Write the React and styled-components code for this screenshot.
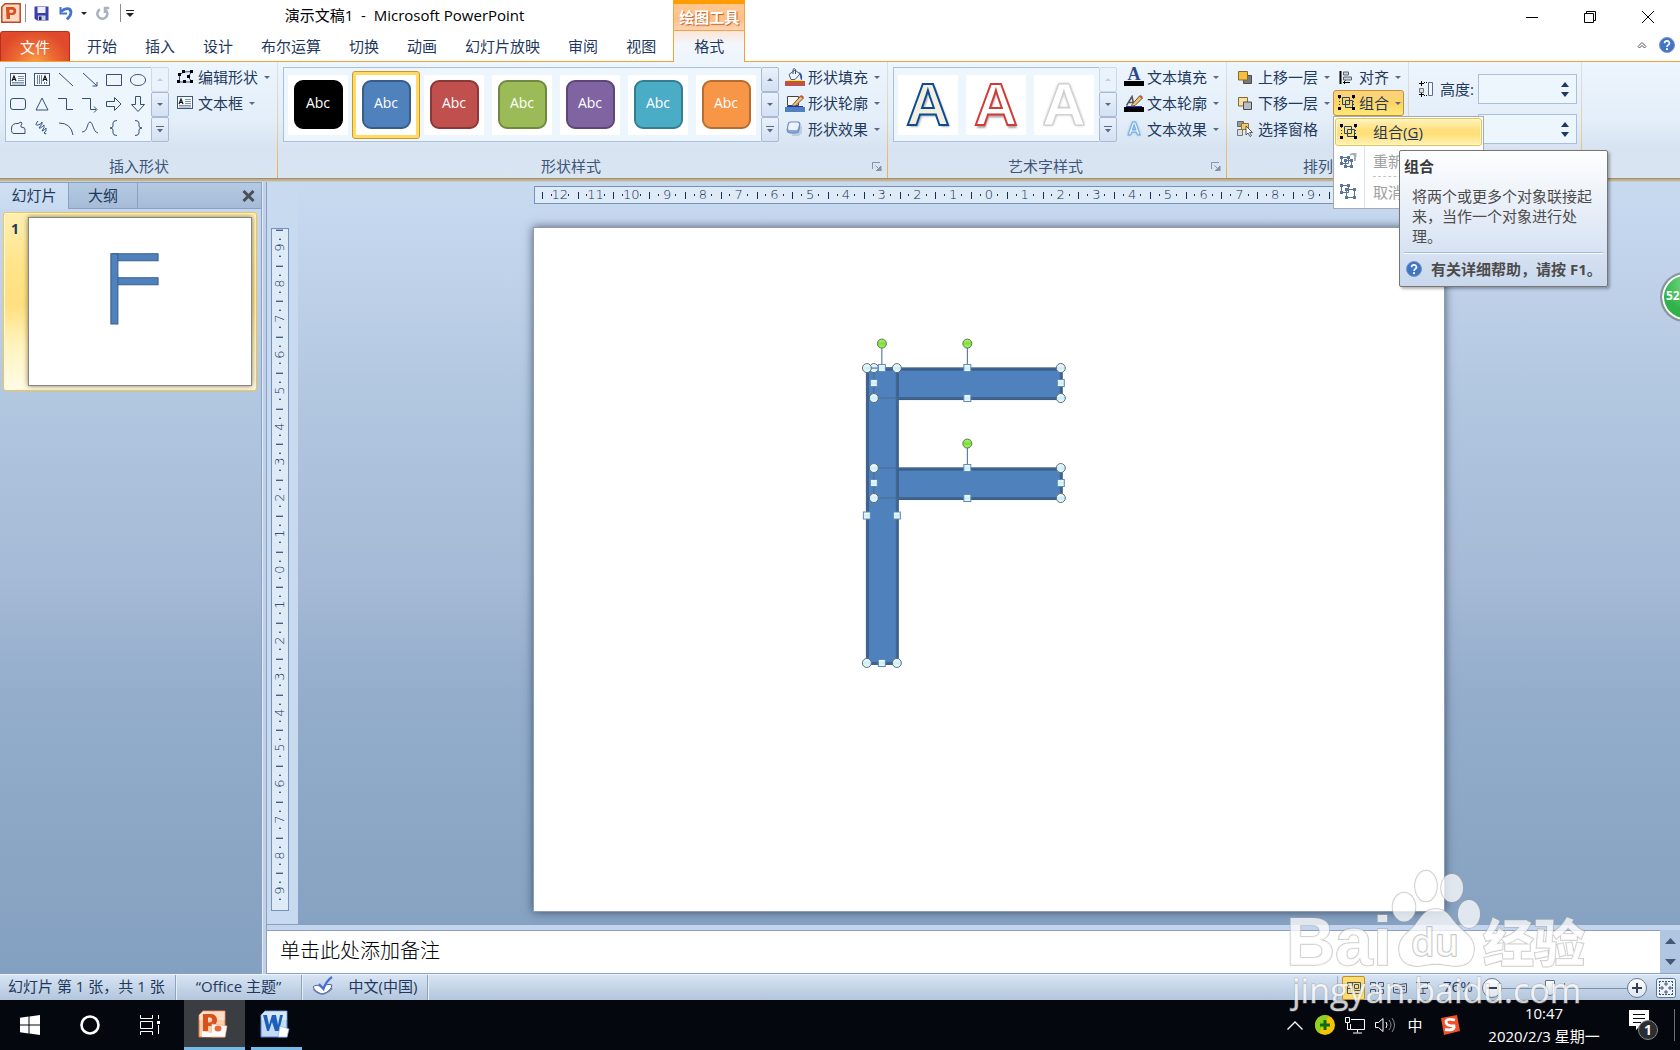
import React from 'react';
import styled, { createGlobalStyle, css } from 'styled-components';

const ink = '#1e395b';
const edge = '#8ba0c4';
const slideHeight = 'calc(100vh - 367px)';

const GlobalStyle = createGlobalStyle`
  * { box-sizing: border-box; }
  body {
    margin: 0;
    overflow: hidden;
    font-family: "Open Sans", "Noto Sans CJK SC", sans-serif;
    font-size: 15px;
    line-height: 20px;
    color: ${ink};
  }
  button, input {
    font: inherit;
    color: inherit;
    margin: 0;
    padding: 0;
    border: 0;
    background: none;
  }
  svg { display: block; flex: none; }
`;

const Desktop = styled.div`
  position: relative;
  display: flex;
  flex-direction: column;
  height: 100vh;
  overflow: hidden;
  background: #ffffff;
`;

/* ---------- title bar and tabs ---------- */

const Header = styled.header`
  display: grid;
  grid-template-columns: auto 72px 1fr;
  grid-template-rows: 31px 31px;
`;

const TitleBar = styled.div`
  display: flex;
  align-items: center;
  padding-bottom: 2px;
`;

const QuickAccess = styled.div`
  display: flex;
  align-items: center;
  align-self: flex-start;
  width: 136px;
  height: 26px;
  padding-left: 1px;
`;

const QuickButton = styled.button`
  display: flex;
  align-items: center;
  justify-content: center;
  width: ${(p) => p.$w || 20}px;
  height: 24px;
`;

const QuickLine = styled.span`
  width: 1px;
  height: 18px;
  margin: 0 4px;
  background: #8d8d8d;
`;

const WindowTitle = styled.h1`
  flex: 1;
  margin: 0;
  font-size: 15px;
  font-weight: 400;
  text-align: center;
  color: #000000;
`;

const ContextTitle = styled.div`
  display: flex;
  align-items: center;
  justify-content: center;
  border: 1px solid #f0a24a;
  border-width: 4px 1px 1px;
  border-top-color: #ff9d00;
  background: linear-gradient(#ffc88f, #fdbf8a 60%, #fdd3b0);
  color: #ffffff;
  font-weight: 700;
  text-shadow: 1px 1px 1px #b8622c;
`;

const WindowButtons = styled.div`
  display: flex;
  justify-content: flex-end;
  padding: 3px 3px 0 0;
`;

const WindowButton = styled.button`
  display: flex;
  align-items: center;
  justify-content: center;
  width: 58px;
  height: 28px;
`;

const Tabs = styled.div`
  display: flex;
  padding-right: 3px;
  border-bottom: 1px solid #f2a433;
`;

const Tab = styled.button`
  height: 30px;
  padding: 0 14px;
  white-space: nowrap;
`;

const FileTab = styled(Tab)`
  width: 70px;
  margin-right: 3px;
  border: 1px solid #b5321a;
  border-bottom: 0;
  border-radius: 3px 3px 0 0;
  background: radial-gradient(ellipse at 50% 110%, #fba24b 0%, #ec6a33 40%, #e0492b 75%);
  color: #ffffff;
`;

const FormatTab = styled(Tab)`
  height: 31px;
  padding-bottom: 2px;
  border: 1px solid #f2a433;
  border-width: 0 1px;
  background: linear-gradient(#fbe6d8, #f3f6fd 45%, #edf5fd);
`;

const HelpArea = styled.div`
  display: flex;
  align-items: center;
  justify-content: flex-end;
  gap: 12px;
  padding: 0 5px 2px 0;
  border-bottom: 1px solid #f2a433;
`;

/* ---------- ribbon ---------- */

const Ribbon = styled.section`
  display: flex;
  height: 116px;
  background: linear-gradient(#edf5fd, #e3eef9 50%, #d7e3f1 75%, #dae5f2);
`;

const RibbonEdge = styled.div`
  height: 4px;
  background: linear-gradient(#a5906b 1px, #bba983 1px, #cbb78f 3px, #c3cedc 3px);
`;

const Group = styled.div`
  display: flex;
  flex-direction: column;
  padding: 2px 4px 0 5px;
  border-right: 1px solid;
  border-image: linear-gradient(#d8e2ee, #e6cfa6 55%, #f2ad45) 0 1 0 0;
`;

const GroupBody = styled.div`
  display: flex;
  gap: ${(p) => p.$gap ?? 3}px;
  height: 90px;
`;

const GroupLabel = styled.div`
  display: flex;
  align-items: center;
  height: 24px;
  color: #3e5578;

  span { flex: 1; text-align: center; }
`;

const Launcher = styled.button`
  display: flex;
  align-items: center;
  justify-content: center;
  width: 20px;
  height: 20px;
  margin: 0 -4px 0 8px;
`;

const Gallery = styled.div`
  display: flex;
  height: 75px;
  margin-top: 3px;
`;

const GalleryBox = styled.div`
  display: flex;
  align-items: center;
  border: 1px solid #a9bfdd;
  border-right: 0;
  background: #eef6fd;
  padding-right: 1px;
`;

const ShapeGrid = styled(GalleryBox)`
  display: grid;
  grid-template-columns: repeat(6, 24px);
  grid-template-rows: repeat(3, 24px);
`;

const ShapeButton = styled.button`
  display: flex;
  align-items: center;
  justify-content: center;
`;

const GalleryScroll = styled.div`
  display: grid;
  grid-template-rows: repeat(3, 1fr);
  width: 18px;
`;

const ScrollButton = styled.button`
  display: flex;
  align-items: center;
  justify-content: center;
  border: 1px solid ${(p) => (p.$off ? '#ccd9ea' : '#a9b9d6')};
  border-radius: 2px;
  background: ${(p) => (p.$off ? '#eaf2fb' : 'linear-gradient(#e9f1fb, #d3e1f3)')};
  color: ${(p) => (p.$off ? '#c3cfdf' : '#596a83')};
`;

const StyleCell = styled.button`
  display: flex;
  align-items: center;
  justify-content: center;
  width: 68px;
  height: 68px;
  border: 4px solid transparent;
  background: #ffffff content-box;
  ${(p) => p.$selected && css`
    border: 1px solid #c79a2b;
    border-radius: 3px;
    background: #ffffff;
    box-shadow: inset 0 0 0 3px #ffdb66;
  `}
`;

const Swatch = styled.span`
  display: flex;
  align-items: center;
  justify-content: center;
  width: 49px;
  height: 49px;
  padding-bottom: 3px;
  border: 2px solid ${(p) => p.$line};
  border-radius: 9px;
  background: ${(p) => p.$fill};
  color: #ffffff;
  font-size: 14px;
`;

const WordArt = styled.span`
  font-family: "Liberation Sans", sans-serif;
  font-size: 60px;
  font-weight: 700;
  line-height: 60px;
  color: ${(p) => p.$fill};
  -webkit-text-stroke: ${(p) => p.$width}px ${(p) => p.$line};
  text-shadow: ${(p) => p.$shadow};
`;

const ToolColumn = styled.div`
  display: flex;
  flex-direction: column;
`;

const ToolButton = styled.button`
  display: flex;
  align-items: center;
  gap: 3px;
  height: 26px;
  padding: 0 2px;
  border: 1px solid transparent;
  border-radius: 3px;
  white-space: nowrap;
  ${(p) => p.$active && css`
    border-color: #c2922e;
    background: linear-gradient(#fbd27c, #fdd466 50%, #ffe77a);
  `}
`;

const ToolIcon = styled.span`
  display: flex;
  align-items: center;
  justify-content: center;
  width: 20px;
  height: 20px;
`;

const Arrow = styled.span`
  margin-left: 3px;
  border: 3px solid transparent;
  border-top-color: #5c6a80;
  border-bottom: 0;
`;

const SizeFields = styled.div`
  display: flex;
  flex-direction: column;
  gap: 10px;
  padding: 10px 0 0 2px;
`;

const SizeRow = styled.div`
  display: grid;
  grid-template-columns: 20px 34px 99px;
  column-gap: 4px;
  align-items: center;
`;

const Spinner = styled.span`
  display: flex;
  align-items: center;
  height: 30px;
  border: 1px solid #a9bfdd;
  background: #edf5fd;

  input { flex: 1; min-width: 0; outline: 0; padding-left: 4px; }
`;

const SpinArrows = styled.span`
  display: flex;
  flex-direction: column;
  gap: 5px;
  margin-right: 7px;
`;

/* ---------- group menu and its tip ---------- */

const MenuAnchor = styled.div`
  position: relative;
`;

const Menu = styled.div`
  position: absolute;
  z-index: 3;
  top: 26px;
  left: 0;
  width: 151px;
  padding: 1px;
  border: 1px solid #a7abb0;
  background: linear-gradient(90deg, #ffffff 30px, #e2e4e7 30px, #e2e4e7 31px, #ffffff 31px);
`;

const MenuItem = styled.button`
  display: flex;
  align-items: center;
  gap: 16px;
  width: 100%;
  height: ${(p) => (p.$active ? 28 : 30)}px;
  padding-left: 4px;
  border: 1px solid transparent;
  border-radius: 3px;
  color: ${(p) => (p.$active ? ink : '#a0a0a0')};
  white-space: nowrap;
  ${(p) => p.$active && css`
    border-color: #efc443;
    background: linear-gradient(#fff3c4, #ffe07c 40%, #ffdf7a 60%, #fff3b8);
    box-shadow: inset 0 0 0 1px #fff7d9;
  `}
`;

const MenuRule = styled.hr`
  height: 0;
  margin: 0 4px 0 38px;
  border: 0;
  border-top: 1px dashed #c5c5c5;
`;

const Tip = styled.div`
  position: absolute;
  z-index: 4;
  top: 60px;
  left: 66px;
  width: 209px;
  padding: 5px 4px 7px;
  border: 1px solid #767676;
  border-radius: 2px;
  background: linear-gradient(#ffffff, #dfe8f5 60%, #c9d8ed);
  box-shadow: 2px 2px 3px rgba(0, 0, 0, 0.3);
  color: #4c4c4c;

  strong { display: block; color: #3b3b3b; }
  p { margin: 10px 8px 6px; }
`;

const TipFoot = styled.div`
  display: flex;
  align-items: center;
  gap: 9px;
  padding: 6px 0 0 2px;
  border-top: 1px solid #9dbbdf;
  box-shadow: inset 0 1px 0 #ffffff;
  white-space: nowrap;
  font-weight: 700;
`;

/* ---------- work area ---------- */

const Work = styled.main`
  display: flex;
  flex: 1;
  min-height: 0;
  background: linear-gradient(#c8daf0, #c0d2ea 12%, #b1c6df 28%, #a5bad6 50%, #93adcb 65%, #84a0c0);
`;

const Outline = styled.aside`
  width: 262px;
  border-right: 1px solid ${edge};
`;

const PaneTabs = styled.div`
  display: flex;
  height: 27px;
  border: 1px solid ${edge};
  border-width: 1px 0;
  background: linear-gradient(#b5cae2, #a5bbd7);
`;

const PaneTab = styled.button`
  width: 69px;
  height: ${(p) => (p.$on ? 26 : 25)}px;
  padding-bottom: 2px;
  border-right: 1px solid ${edge};
  background: ${(p) => (p.$on ? 'linear-gradient(#cfe0f4, #c8daf0)' : 'none')};
`;

const PaneClose = styled.button`
  display: flex;
  align-items: center;
  margin-left: auto;
  padding: 0 6px;
`;

const ThumbItem = styled.div`
  display: flex;
  gap: 9px;
  margin: 3px 4px 0 3px;
  padding: 4px 4px 4px 7px;
  border: 1px solid #f0c754;
  border-radius: 3px;
  background: linear-gradient(#ffeeb0, #ffe48a 30%, #ffe080 52%, #fff4bf 75%, #fffbe6);
  box-shadow: inset 0 0 0 1px #fff6d6;
  font-weight: 700;
  font-size: 14px;
  line-height: 24px;
`;

const ThumbSlide = styled.div`
  flex: 1;
  border: 1px solid #84868c;
  background: #ffffff;
  box-shadow: 0 0 5px #8b7b46;

  svg { width: 100%; height: auto; }
`;

const Splitter = styled.div`
  width: 5px;
  border-right: 1px solid ${edge};
  background: linear-gradient(90deg, #e2ebf8 1px, #bfd1ea 1px);
`;

const Editor = styled.section`
  display: flex;
  flex: 1;
  flex-direction: column;
  min-width: 0;
`;

const Stage = styled.div`
  display: flex;
  flex: 1;
  min-height: 0;
  border-bottom: 1px solid ${edge};
`;

const Gutter = styled.div`
  width: 31px;
  padding: 46px 0 0 4px;
  background: #c7daf0;
`;

const rulerBox = css`
  display: flex;
  justify-content: center;
  overflow: hidden;
  border: 1px solid #7592b8;
  background: #dfeaf7;
  color: #0d2f5a;
  font-family: "DejaVu Sans", "DejaVu Sans Light", sans-serif;
  font-size: 13px;
  font-weight: 200;
  line-height: 16px;
`;

const RulerX = styled.div`
  ${rulerBox}
  height: 18px;
  margin: 4px 0 24px;
`;

const MarkX = styled.span`
  flex: 0 0 calc(100% / 25.4);
  text-align: center;
  background:
    linear-gradient(#0d2f5a, #0d2f5a) 0 50% / 1px 7px no-repeat,
    linear-gradient(#0d2f5a, #0d2f5a) 25% 50% / 1px 2px no-repeat,
    linear-gradient(#0d2f5a, #0d2f5a) 75% 50% / 1px 2px no-repeat;
`;

const RulerY = styled.div`
  ${rulerBox}
  flex-direction: column;
  width: 18px;
  height: ${slideHeight};
`;

const MarkY = styled.span`
  flex: 0 0 calc(100% / 19.05);
  writing-mode: vertical-rl;
  transform: rotate(180deg);
  text-align: center;
  background:
    linear-gradient(#0d2f5a, #0d2f5a) 50% 100% / 7px 1px no-repeat,
    linear-gradient(#0d2f5a, #0d2f5a) 50% 25% / 2px 1px no-repeat,
    linear-gradient(#0d2f5a, #0d2f5a) 50% 75% / 2px 1px no-repeat;
`;

const SlideColumn = styled.div`
  width: calc(${slideHeight} * 4 / 3);
  margin: 0 auto;
`;

const Slide = styled.div`
  height: ${slideHeight};
  background: #ffffff;
  box-shadow: 0 0 0 1px #8b9bb0, 0 0 9px 1px rgba(40, 55, 80, 0.75);

  svg { width: 100%; height: 100%; }
`;

const NotesRow = styled.div`
  display: flex;
  height: 49px;
  border-top: 5px solid #c3d5ec;
  border-bottom: 1px solid ${edge};
`;

const Notes = styled.textarea`
  flex: 1;
  border: 0;
  border-top: 1px solid ${edge};
  padding: 7px 13px 0;
  resize: none;
  outline: 0;
  background: #ffffff;
  font-family: "Liberation Serif", "Noto Sans CJK SC", serif;
  font-size: 20px;
  font-weight: 300;
  line-height: 26px;
  color: #000000;
  overflow: hidden;

  &::placeholder { color: #000000; }
`;

const NotesScroll = styled.div`
  display: flex;
  flex-direction: column;
  align-items: center;
  justify-content: space-between;
  width: 20px;
  padding: 8px 0;
  background: #b1c6e1;
`;

/* ---------- status bar ---------- */

const Status = styled.footer`
  display: flex;
  align-items: center;
  height: 26px;
  border-top: 1px solid #edf3fb;
  background: linear-gradient(#d7e4f4, #c3d3e6 55%, #b3c6dd);
  white-space: nowrap;
`;

const StatusCell = styled.span`
  display: flex;
  align-items: center;
  justify-content: ${(p) => (p.$first ? 'flex-start' : 'center')};
  gap: 15px;
  width: ${(p) => (p.$first ? 176 : 126)}px;
  height: 25px;
  padding-bottom: 4px;
  padding-left: ${(p) => (p.$first ? 8 : 0)}px;
  border-right: 1px solid #8fa3bf;
  box-shadow: 1px 0 0 #e6eef8;
`;

const Views = styled.span`
  display: flex;
  align-items: center;
  margin-left: auto;
  padding-left: 4px;
  border-left: 1px solid #9db0ca;
`;

const ViewButton = styled.button`
  display: flex;
  align-items: center;
  justify-content: center;
  width: 23px;
  height: 24px;
  border: 1px solid ${(p) => (p.$on ? '#bf8f2c' : 'transparent')};
  border-radius: 2px;
  background: ${(p) => (p.$on ? '#fddc72' : 'none')};
`;

const Percent = styled.span`
  width: 42px;
  height: 24px;
  margin-left: 6px;
  padding-left: 3px;
`;

const RoundButton = styled.button`
  display: flex;
  align-items: center;
  justify-content: center;
  width: 20px;
  height: 20px;
  border: 1px solid #6a7990;
  border-radius: 50%;
  background: linear-gradient(#ffffff, #dbe4f0);
`;

const Zoom = styled.input`
  -webkit-appearance: none;
  appearance: none;
  width: 125px;
  height: 20px;
  background:
    linear-gradient(#5d7190, #5d7190) 50% 5px / 1px 7px no-repeat,
    linear-gradient(#7d90ad, #7d90ad) 0 10px / 100% 1px no-repeat;

  &::-webkit-slider-thumb {
    -webkit-appearance: none;
    width: 10px;
    height: 16px;
    border: 1px solid #60718c;
    border-radius: 1px 1px 5px 5px;
    background: linear-gradient(#ffffff, #cfdcec);
  }
`;

const FitButton = styled.button`
  margin: 0 4px 0 9px;
`;

/* ---------- taskbar ---------- */

const Taskbar = styled.nav`
  display: flex;
  align-items: center;
  height: 50px;
  background: #04070e;
  color: #ffffff;
`;

const TaskButton = styled.button`
  display: flex;
  align-items: center;
  justify-content: center;
  width: 60px;
  height: 50px;
`;

const AppButton = styled(TaskButton)`
  width: ${(p) => (p.$on ? 61 : 51)}px;
  margin-left: ${(p) => (p.$on ? 4 : 6)}px;
  padding-right: 3px;
  border-bottom: 3px solid #76b9ed;
  background: ${(p) => (p.$on ? '#3a3d42' : 'none')};
`;

const Tray = styled.div`
  display: flex;
  align-items: center;
  gap: 10px;
  margin-left: auto;
`;

const TrayButton = styled.button`
  display: flex;
  align-items: center;
  justify-content: center;
  width: 20px;
  height: 30px;
`;

const ImeButton = styled(TrayButton)`
  margin-left: 5px;
`;

const Clock = styled.time`
  display: flex;
  flex-direction: column;
  gap: 3px;
  width: 130px;
  margin-left: 9px;
  padding-bottom: 2px;
  text-align: center;
  white-space: nowrap;
`;

const Notice = styled.button`
  margin-left: 8px;
  padding-right: 15px;
  margin-right: 5px;
  border-right: 1px solid #6d6f74;
`;

/* ---------- floating pieces ---------- */

const SpeedBall = styled.div`
  position: absolute;
  top: 272px;
  right: -30px;
  width: 50px;
  height: 50px;
  padding: 14px 0 0 4px;
  border: 2px solid #8d959b;
  border-radius: 50%;
  background: radial-gradient(circle at 60% 20%, #7ee08b, #30b14a 60%);
  box-shadow: inset 0 0 0 2px #ffffff;
  color: #ffffff;
  font-size: 12px;
  font-weight: 700;
  line-height: 16px;
`;

const Watermark = styled.svg`
  position: absolute;
  right: 88px;
  bottom: 30px;
  pointer-events: none;
`;

/* ---------- icons ---------- */

const HelpIcon = () => (
  <svg width="16" height="16" viewBox="0 0 16 16">
    <circle cx="8" cy="8" r="7.5" fill="#3f74c6" stroke="#7c93bd" />
    <path d="M5.6 6.2a2.4 2.3 0 1 1 3.6 1.9Q8 8.8 8 10" fill="none" stroke="#fff" strokeWidth="1.7" />
    <circle cx="8" cy="12.2" r="1.1" fill="#fff" />
  </svg>
);

const PptMini = () => (
  <svg width="20" height="20" viewBox="0 0 20 20">
    <path d="M4 .8h15.2v18.4H.8V4z" fill="#fbd9c4" stroke="#c8441d" strokeWidth="1.5" />
    <path d="M5 4h6.5c5 0 5 8 0 8H9v4H5.5zM8.500 6.700v3h2.500c2 0 2-3 0-3z" fill="#d8501c" fillRule="evenodd" />
  </svg>
);

const SaveIcon = () => (
  <svg width="15" height="15" viewBox="0 0 15 15">
    <path d="M.5.5h14v14H3l-2.500-2z" fill="#3d3fa8" />
    <path d="M3.500 1h8v6h-8z" fill="#eef1fb" />
    <path d="M4 9.500h7.500V14H4z" fill="#c6cce8" />
    <path d="M5 10.500h2.500V14H5z" fill="#20206a" />
  </svg>
);

const UndoIcon = ({ flip }) => (
  <svg width="15" height="15" viewBox="0 0 15 15">
    {flip ? (
      <path d="M5 3.300A5 5 0 1 0 10 3.500V7M10.200 6.500V2h4" fill="none" stroke="#aab2bd" strokeWidth="2.600" />
    ) : (
      <g fill="none" stroke="#4673cf">
        <path d="M2 5.500C7 1 12 2 12 6.500c0 3-2 4.500-4 7" strokeWidth="2.800" />
        <path d="M1.500 1v6.500H8" strokeWidth="2" />
      </g>
    )}
  </svg>
);

const pen = { fill: 'none', stroke: '#33507c', strokeWidth: 1 };

const TextBoxIcon = ({ vertical }) => (
  <svg width="16" height="14" viewBox="0 0 16 14">
    <rect x=".5" y=".5" width="15" height="12" fill="#f7fbff" stroke="#3f5674" />
    {vertical ? (
      <path d="M3.500 2v9M5.500 2v9M7.500 2v9M10.500 9v2M12.500 9v2" {...pen} stroke="#6a80a0" />
    ) : (
      <path d="M8 3.500h6M8 5.500h6M8 7.500h6M2 9.500h12M2 11h12" {...pen} stroke="#8094b0" />
    )}
    <path d={vertical ? 'M9 8l2-5 2 5M10 6.500h2.500' : 'M2 8l2-5 2 5M3 6.500h2.500'} {...pen} stroke="#111" strokeWidth="1.200" />
  </svg>
);

const shapes = [
  <TextBoxIcon key="a" />,
  <TextBoxIcon key="b" vertical />,
  'M1 1l14 13',
  'M1 1l14 13M15 10v4h-4.500',
  'M.5 2.500h15v11H.5z',
  'M8 2.500c10 0 10 11 0 11s-10-11 0-11',
  'M3 2.500h10q2.500 0 2.500 2.500v6q0 2.500-2.500 2.500H3Q.5 13.500.5 11V5Q.5 2.500 3 2.500z',
  'M8 2l6 12H2z',
  'M0 2.500h8.500v11H15',
  'M0 2.500h8.500v11H14M12 10.500l3 3-3 3',
  'M.5 5.500h8v-4L15 8l-6.500 6.500v-4h-8z',
  'M5.500.5h5v8h4L8 15.500 1.500 8.500h4z',
  'M1.500 8Q2 3 8 3.500L11 2q2 1 0 3.500-1 2 2 2 2.500 0 2 3v3H4Q1 13.500 1.500 8z',
  'M4 1Q0 6 4 5t4-3q1 2-3 6 1 1 5-3 1 2-2 6 3-1 4-3 1 3-2 5 2 2 2 0',
  'M1 3q12 0 14 12',
  'M0 12C6 12 5 2 8 2s3 10 8 11',
  'M11 .5Q7 .5 7 3v3q0 2-3 2 3 0 3 2v3q0 2.500 4 2.500',
  'M5 .5q4 0 4 2.500v3q0 2 3 2-3 0-3 2v3q0 2.500-4 2.500',
];

const filled = [4, 5, 6, 7, 10, 11, 12];

const ShapeGlyph = ({ d, fill }) => (
  <svg width="16" height="16" viewBox="0 0 16 16" overflow="visible">
    <path d={d} {...pen} fill={fill ? '#eff4fb' : 'none'} />
  </svg>
);

const EditShapeIcon = () => (
  <svg width="17" height="14" viewBox="0 0 17 14">
    <path d="M2.500 12V4.500L7 2l8-.5-4 5 4 5.500z" {...pen} />
    <path d="M1 3h3v3H1zM5 0h3v3H5zM13 0h3v3h-3zM10 5h3v3h-3zM0 10h3v3H0zM6 10h3v3H6zM13 10h3v3h-3z" fill="#000" />
  </svg>
);

const BucketIcon = () => (
  <svg width="20" height="18" viewBox="0 0 20 18">
    <path d="M4 6.500L10 2l5 4-5 5.500H6z" fill="#f1f4fa" stroke="#4d5c77" />
    <path d="M8 6V1.500q1-2 2.500 0V6" {...pen} />
    <path d="M14 4q4 1 3 8-2 0-2-5z" fill="#2f5ea8" />
    <path d="M2 12h16v1H2z" fill="#fff200" />
    <path d="M0 13h20v5H0z" fill="#c0504d" />
  </svg>
);

const Pencil = () => (
  <>
    <path d="M8 9.500L15.500 1l3 2-7.500 7.500-3.500 1z" fill="#edc27c" stroke="#6e5230" />
    <path d="M15 1.500l1.500-1.500 2.500 2-1.500 1.500z" fill="#c2574b" />
  </>
);

const PenIcon = () => (
  <svg width="20" height="17" viewBox="0 0 20 17">
    <path d="M2.500 1.500h11v9h-11z" fill="#f6f6f6" stroke="#444" />
    <Pencil />
    <path d="M2 11h16v1H2z" fill="#2a2ad0" />
    <path d="M0 12h20v5H0z" fill="#4f81bd" />
  </svg>
);

const EffectIcon = () => (
  <svg width="18" height="16" viewBox="0 0 18 16">
    <path d="M5 5h11v7l-3 3H6z" fill="#a9b8d8" opacity=".6" />
    <path d="M4 1h8q2 0 2 2l-1 6q0 3-3 3H4q-3 0-3-3l1-5q0-3 2-3z" fill="#89a8de" stroke="#6f86b6" />
    <path d="M5 1.500h6q2 0 2 2L12 7q0 2-2 2H4q-2 0-2-2l1-4q0-1.500 2-1.500z" fill="#eef4ff" />
  </svg>
);

const LetterTool = styled.span`
  display: flex;
  flex-direction: column;
  align-items: center;
  width: 20px;
  height: 18px;
  border-bottom: 5px solid #000000;
  font-family: "Liberation Serif", serif;
  font-size: 18px;
  font-weight: 700;
  line-height: 12px;
  color: #2b4a8b;
`;

const GlowLetter = styled.span`
  font-family: "Liberation Sans", sans-serif;
  font-size: 18px;
  line-height: 20px;
  font-weight: 700;
  color: #ffffff;
  -webkit-text-stroke: 1px #6fa8dc;
  text-shadow: 0 0 3px #59b4e8;
`;

const TextPenIcon = () => (
  <svg width="20" height="17" viewBox="0 0 20 17">
    <path d="M2.500 10.500L8 1.500l2 9M5 7.500h4" {...pen} stroke="#555" strokeWidth="1.500" />
    <Pencil />
    <path d="M2 11h16v1H2z" fill="#2a2ad0" />
    <path d="M0 12h20v5H0z" fill="#000" />
  </svg>
);

const OrderIcon = ({ back }) => (
  <svg width="14" height="13" viewBox="0 0 14 13">
    {!back && <path d="M5.500 4.500h8v8h-8z" fill="#77797d" stroke="#4a4c50" />}
    <path d="M.5.5h9v8.500h-9z" fill={back ? '#f6dfa0' : '#f7bf3c'} stroke="#806a3a" />
    {back && <path d="M5.500 5h8v7.500h-8z" fill="#b9bcc3" stroke="#4a4c50" />}
  </svg>
);

const PaneIcon = () => (
  <svg width="16" height="16" viewBox="0 0 16 16">
    <path d="M.5.5h6v5h-6z" fill="#999" stroke="#666" />
    <path d="M.5 8.500h5v6h-5z" fill="#ddd" stroke="#777" />
    <path d="M4.500 2.500h7v6h-7z" fill="#f3c968" stroke="#8f7338" />
    <path d="M9 5v9l2-2 2 3.500 1.500-1-2-3h3z" fill="#fff" stroke="#333" strokeWidth=".8" />
  </svg>
);

const AlignIcon = () => (
  <svg width="14" height="13" viewBox="0 0 14 13">
    <path d="M1.500 0v13" stroke="#000" strokeWidth="2" />
    <path d="M4.500 1h5v3h-5zM4.500 6h8v3h-8z" fill="#cdd3dc" stroke="#5b6675" />
    <path d="M4 11.500h7M6.500 9.500l-2 2 2 2" {...pen} stroke="#000" />
  </svg>
);

const GroupIcon = () => (
  <svg width="17" height="16" viewBox="0 0 17 16">
    <path d="M4.500 2.500h7v7h-7zM7.500 5.500h7v7h-7z" fill="none" stroke="#24456e" />
    <path d="M1.500 3v9M15.500 3v9" stroke="#24456e" strokeDasharray="1 2" />
    <path d="M0 0h3v3H0zM14 0h3v3h-3zM0 12h3v3H0zM14 12h3v3h-3z" fill="#000" />
  </svg>
);

const UngroupIcon = ({ again }) => (
  <svg width="17" height="16" viewBox="0 0 17 16">
    <path d={again ? 'M1.500 4.500h7v6h-7zM5.500 7.500h6v6h-6z' : 'M1.500 1.500h7v7h-7zM6.500 5.500h8v8h-8z'} fill="none" stroke="#5b7499" />
    <path
      d={again
        ? 'M0 3h3v3H0zM7 3h3v3H7zM0 9h3v3H0zM4 6h3v3H4zM10 6h3v3h-3zM4 12h3v3H4zM10 12h3v3h-3z'
        : 'M0 0h3v3H0zM7 0h3v3H7zM0 7h3v3H0zM5 4h3v3H5zM13 4h3v3h-3zM5 12h3v3H5zM13 12h3v3h-3z'}
      fill="#5b7499"
    />
    {again && <path d="M10 2q4-3 5 2v4M13 1l2.500 0v3" fill="none" stroke="#a3adbb" strokeWidth="1.800" />}
  </svg>
);

const SizeIcon = ({ flat }) => (
  <svg width="14" height="16" viewBox="0 0 14 16" transform={flat ? 'rotate(90)' : undefined}>
    <path d="M9.500 1.500h4v13h-4z" fill="#f4f8fd" stroke="#5a6d88" />
    <path d="M.5 7.500h4v4h-4z" fill="#ddd" stroke="#777" />
    <path d="M0 2.500h5M2.500 0v5M0 13.500h5M2.500 12v4" {...pen} stroke="#000" />
    <path d="M5 1.500h4M5 14.500h4" {...pen} stroke="#000" strokeDasharray="1 1" />
  </svg>
);

const Triangle = ({ up, w = 8, h = 5, color = '#1e395b' }) => (
  <svg width={w} height={h} viewBox="0 0 8 5" preserveAspectRatio="none">
    <path d={up ? 'M0 5l4-5 4 5z' : 'M0 0h8L4 5z'} fill={color} />
  </svg>
);

const SpellIcon = () => (
  <svg width="22" height="20" viewBox="0 0 22 20">
    <path d="M1 11q4-4 9 1 4-5 10-3-1 6-9 9Q4 17 1 11z" fill="#fff" stroke="#4a66a8" />
    <path d="M1.500 13q4 5 9.500 5 7-2 9-6" {...pen} stroke="#6a7fae" strokeWidth="1.500" />
    <path d="M7 8l4.500 5Q14 5 20 1" fill="none" stroke="#4a6fd0" strokeWidth="2.200" />
  </svg>
);

const OfficeIcon = ({ word }) => {
  const main = word ? '#1c5fb8' : '#d9501a';
  return (
    <svg width="30" height="28" viewBox="0 0 30 28">
      <path d="M5 1h22v26H1V5z" fill={word ? '#c5daf5' : '#fbcda9'} stroke={word ? '#4f86cf' : '#e2764a'} />
      <path d="M5 1h22v9H1V5z" fill="#fff" opacity=".35" />
      {word ? (
        <path d="M3 5h4l2 10 3-10h4l2 10 2-10h3l-4 16h-4l-3-9-3 9H7z" fill={main} />
      ) : (
        <path d="M5 4h8c8 0 8 12 0 12h-3v5H5zM10 7.500v5h2c3 0 3-5 0-5z" fill={main} fillRule="evenodd" />
      )}
      <path d={word ? 'M20 16l9 3-2 8h-9z' : 'M14 14l15 2-2 11H13z'} fill="#fff" stroke={word ? '#8fb0dd' : '#efb28e'} strokeWidth=".7" />
      {!word && <ellipse cx="20" cy="18.500" rx="3.500" ry="3" fill="#e9673a" />}
      {!word && <path d="M4 21l14 3-6 3H4z" fill="#fff" />}
    </svg>
  );
};

/* ---------- data ---------- */

const tabNames = ['开始', '插入', '设计', '布尔运算', '切换', '动画', '幻灯片放映', '审阅', '视图'];

const swatches = [
  ['#000000', '#000000'],
  ['#4f81bd', '#385d8a'],
  ['#c0504d', '#8c3836'],
  ['#9bbb59', '#71893f'],
  ['#8064a2', '#5c4776'],
  ['#4bacc6', '#357d91'],
  ['#f79646', '#b66d31'],
];

const wordArts = [
  { fill: '#f2eee0', line: '#0d4a94', width: 2, shadow: '2px 2px 2px #b5b5b5' },
  { fill: '#ffffff', line: '#d33a36', width: 2, shadow: '1px 3px 2px #a8a8a8' },
  { fill: '#ffffff', line: '#cfcfcf', width: 1, shadow: '0 0 3px #8a8a8a' },
];

const rulerX = Array.from({ length: 25 }, (_, i) => Math.abs(i - 12));
const rulerY = Array.from({ length: 19 }, (_, i) => Math.abs(i - 9));

const bars = [
  { x: 340, y: 140, w: 187, h: 30 },
  { x: 340, y: 240, w: 187, h: 30 },
  { x: 333, y: 140, w: 30, h: 295 },
];

/* ---------- parts ---------- */

function Tool({ icon, label, arrow = true, active }) {
  return (
    <ToolButton type="button" $active={active}>
      <ToolIcon>{icon}</ToolIcon>
      {label}
      {arrow && <Arrow />}
    </ToolButton>
  );
}

function Scroller({ first }) {
  return (
    <GalleryScroll>
      <ScrollButton type="button" $off={first} aria-label="向上">
        <Triangle up w={6} h={3} color="currentColor" />
      </ScrollButton>
      <ScrollButton type="button" aria-label="向下">
        <Triangle w={6} h={3} color="currentColor" />
      </ScrollButton>
      <ScrollButton type="button" aria-label="其他">
        <svg width="8" height="7" viewBox="0 0 8 7">
          <path d="M0 0h8v1H0zM1 3h6L4 6.500z" fill="currentColor" />
        </svg>
      </ScrollButton>
    </GalleryScroll>
  );
}

function DialogLauncher() {
  return (
    <Launcher type="button" aria-label="更多选项">
      <svg width="10" height="9" viewBox="0 0 10 9">
        <path d="M.5 7V.5H8" {...pen} stroke="#8693a6" />
        <path d="M9 4v5H4zM3.500 3.500l3 3" fill="#8693a6" stroke="#8693a6" />
      </svg>
    </Launcher>
  );
}

function SizeField({ id, label, flat }) {
  return (
    <SizeRow>
      <ToolIcon><SizeIcon flat={flat} /></ToolIcon>
      <label htmlFor={id}>{label}</label>
      <Spinner>
        <input id={id} type="text" />
        <SpinArrows>
          <Triangle up />
          <Triangle />
        </SpinArrows>
      </Spinner>
    </SizeRow>
  );
}

function Selection({ x, y, w, h }) {
  const mx = x + w / 2;
  const my = y + h / 2;
  const corners = [[x, y], [x + w, y], [x, y + h], [x + w, y + h]];
  const sides = [[mx, y], [mx, y + h], [x, my], [x + w, my]];
  return (
    <g>
      <rect x={x} y={y} width={w} height={h} fill="none" stroke="#4a6c90" />
      <path d={`M${mx} ${y}v-24`} stroke="#3d6591" />
      <circle cx={mx} cy={y - 24.5} r="4.500" fill="url(#green)" stroke="#5e6f5a" />
      {corners.map(([cx, cy]) => (
        <circle key={`${cx}-${cy}`} cx={cx} cy={cy} r="4.500" fill="url(#handle)" stroke="#5d6a75" />
      ))}
      {sides.map(([cx, cy]) => (
        <rect key={`${cx}-${cy}`} x={cx - 3.5} y={cy - 3.5} width="7" height="7" fill="url(#handle)" stroke="#5c88b8" />
      ))}
    </g>
  );
}

function SlideDrawing() {
  return (
    <svg viewBox="0 0 911 683">
      <defs>
        <linearGradient id="handle" x2="0" y2="1">
          <stop offset="0" stopColor="#ffffff" />
          <stop offset=".5" stopColor="#c9eef6" />
          <stop offset="1" stopColor="#f2fcff" />
        </linearGradient>
        <linearGradient id="green" x2="0" y2="1">
          <stop offset="0" stopColor="#b6f57a" />
          <stop offset=".5" stopColor="#7be036" />
          <stop offset="1" stopColor="#aaf56c" />
        </linearGradient>
      </defs>
      {bars.map((b) => (
        <rect key={`${b.x}-${b.y}`} x={b.x + 0.5} y={b.y + 1} width={b.w} height={b.h - 0.5} fill="#4f81bd" stroke="#385d8a" strokeWidth="3" />
      ))}
      {bars.map((b) => (
        <Selection key={`${b.x}-${b.y}`} {...b} />
      ))}
    </svg>
  );
}

function ThumbDrawing() {
  return (
    <svg viewBox="0 0 221 166">
      <g fill="#4f81bd" stroke="#385d8a">
        <path d="M83.500 35.500h45v7h-45zM83.500 59.500h45v7h-45z" />
        <path d="M81.500 35.500h7v70h-7z" />
      </g>
    </svg>
  );
}

function GroupMenu() {
  return (
    <MenuAnchor>
      <Tool icon={<GroupIcon />} label="组合" active />
      <Menu role="menu">
        <MenuItem type="button" role="menuitem" $active>
          <GroupIcon />
          <span>组合(<u>G</u>)</span>
        </MenuItem>
        <MenuItem type="button" role="menuitem">
          <UngroupIcon again />
          重新组合
        </MenuItem>
        <MenuRule />
        <MenuItem type="button" role="menuitem">
          <UngroupIcon />
          取消组合
        </MenuItem>
      </Menu>
      <Tip role="tooltip">
        <strong>组合</strong>
        <p>将两个或更多个对象联接起来，当作一个对象进行处理。</p>
        <TipFoot>
          <HelpIcon />
          有关详细帮助，请按 F1。
        </TipFoot>
      </Tip>
    </MenuAnchor>
  );
}

function TopBar() {
  return (
    <Header>
      <TitleBar>
        <QuickAccess>
          <PptMini />
          <QuickLine />
          <QuickButton type="button" $w={24} aria-label="保存"><SaveIcon /></QuickButton>
          <QuickButton type="button" $w={28} aria-label="撤消"><UndoIcon /></QuickButton>
          <QuickButton type="button" $w={9} aria-label="撤消列表"><Triangle w={6} h={3} color="#222" /></QuickButton>
          <QuickButton type="button" $w={28} aria-label="恢复"><UndoIcon flip /></QuickButton>
          <QuickLine />
          <QuickButton type="button" $w={12} aria-label="自定义">
            <svg width="8" height="7" viewBox="0 0 8 7"><path d="M0 0h8v1H0zM0 3h8L4 7z" fill="#222" /></svg>
          </QuickButton>
        </QuickAccess>
        <WindowTitle>演示文稿1&nbsp; -&nbsp; Microsoft PowerPoint</WindowTitle>
      </TitleBar>
      <ContextTitle>绘图工具</ContextTitle>
      <WindowButtons>
        <WindowButton type="button" aria-label="最小化">
          <svg width="12" height="12" viewBox="0 0 12 12"><path d="M0 6.500h12" stroke="#000" /></svg>
        </WindowButton>
        <WindowButton type="button" aria-label="还原">
          <svg width="12" height="12" viewBox="0 0 12 12"><path d="M.5 2.500h9v9h-9zM2.500 2V.5h9v9H10" fill="none" stroke="#000" /></svg>
        </WindowButton>
        <WindowButton type="button" aria-label="关闭">
          <svg width="12" height="12" viewBox="0 0 12 12"><path d="M0 0l12 12M12 0L0 12" stroke="#000" /></svg>
        </WindowButton>
      </WindowButtons>
      <Tabs role="tablist">
        <FileTab type="button">文件</FileTab>
        {tabNames.map((name) => (
          <Tab key={name} type="button" role="tab">{name}</Tab>
        ))}
      </Tabs>
      <FormatTab type="button" role="tab" aria-selected="true">格式</FormatTab>
      <HelpArea>
        <svg width="10" height="8" viewBox="0 0 10 8">
          <path d="M1 5.500L5 1.500l4 4-1.500 1.500L5 4.500 2.500 7z" fill="#fff" stroke="#555" />
        </svg>
        <HelpIcon />
      </HelpArea>
    </Header>
  );
}

function RibbonBar() {
  return (
    <Ribbon>
      <Group>
        <GroupBody>
          <Gallery>
            <ShapeGrid>
              {shapes.map((shape, i) => (
                <ShapeButton key={i} type="button" aria-label="形状">
                  {typeof shape === 'string' ? <ShapeGlyph d={shape} fill={filled.includes(i)} /> : shape}
                </ShapeButton>
              ))}
            </ShapeGrid>
            <Scroller first />
          </Gallery>
          <ToolColumn>
            <Tool icon={<EditShapeIcon />} label="编辑形状" />
            <Tool icon={<TextBoxIcon />} label="文本框" />
          </ToolColumn>
        </GroupBody>
        <GroupLabel><span>插入形状</span></GroupLabel>
      </Group>

      <Group>
        <GroupBody>
          <Gallery>
            <GalleryBox>
              {swatches.map(([fill, line], i) => (
                <StyleCell key={fill} type="button" $selected={i === 1}>
                  <Swatch $fill={fill} $line={line}>Abc</Swatch>
                </StyleCell>
              ))}
            </GalleryBox>
            <Scroller />
          </Gallery>
          <ToolColumn>
            <Tool icon={<BucketIcon />} label="形状填充" />
            <Tool icon={<PenIcon />} label="形状轮廓" />
            <Tool icon={<EffectIcon />} label="形状效果" />
          </ToolColumn>
        </GroupBody>
        <GroupLabel><span>形状样式</span><DialogLauncher /></GroupLabel>
      </Group>

      <Group>
        <GroupBody $gap={4}>
          <Gallery>
            <GalleryBox>
              {wordArts.map((art) => (
                <StyleCell key={art.line} type="button">
                  <WordArt $fill={art.fill} $line={art.line} $width={art.width} $shadow={art.shadow}>A</WordArt>
                </StyleCell>
              ))}
            </GalleryBox>
            <Scroller first />
          </Gallery>
          <ToolColumn>
            <Tool icon={<LetterTool>A</LetterTool>} label="文本填充" />
            <Tool icon={<TextPenIcon />} label="文本轮廓" />
            <Tool icon={<GlowLetter>A</GlowLetter>} label="文本效果" />
          </ToolColumn>
        </GroupBody>
        <GroupLabel><span>艺术字样式</span><DialogLauncher /></GroupLabel>
      </Group>

      <Group>
        <GroupBody $gap={0}>
          <ToolColumn>
            <Tool icon={<OrderIcon />} label="上移一层" />
            <Tool icon={<OrderIcon back />} label="下移一层" />
            <Tool icon={<PaneIcon />} label="选择窗格" arrow={false} />
          </ToolColumn>
          <ToolColumn>
            <Tool icon={<AlignIcon />} label="对齐" />
            <GroupMenu />
          </ToolColumn>
        </GroupBody>
        <GroupLabel><span>排列</span></GroupLabel>
      </Group>

      <Group>
        <GroupBody>
          <SizeFields>
            <SizeField id="shape-height" label="高度:" />
            <SizeField id="shape-width" label="宽度:" flat />
          </SizeFields>
        </GroupBody>
        <GroupLabel><span>大小</span></GroupLabel>
      </Group>
    </Ribbon>
  );
}

function WorkArea() {
  return (
    <Work>
      <Outline>
        <PaneTabs>
          <PaneTab type="button" $on>幻灯片</PaneTab>
          <PaneTab type="button">大纲</PaneTab>
          <PaneClose type="button" aria-label="关闭窗格">
            <svg width="13" height="12" viewBox="0 0 13 12">
              <path d="M1.500 1l10 10M11.500 1l-10 10" stroke="#4b4f57" strokeWidth="3" />
            </svg>
          </PaneClose>
        </PaneTabs>
        <ThumbItem>
          <span>1</span>
          <ThumbSlide><ThumbDrawing /></ThumbSlide>
        </ThumbItem>
      </Outline>
      <Splitter />
      <Editor>
        <Stage>
          <Gutter>
            <RulerY>
              {rulerY.map((n, i) => <MarkY key={i}>{n}</MarkY>)}
            </RulerY>
          </Gutter>
          <SlideColumn>
            <RulerX>
              {rulerX.map((n, i) => <MarkX key={i}>{n}</MarkX>)}
            </RulerX>
            <Slide><SlideDrawing /></Slide>
          </SlideColumn>
        </Stage>
        <NotesRow>
          <Notes aria-label="备注" placeholder="单击此处添加备注" />
          <NotesScroll>
            <Triangle up w={11} h={6} color="#44577a" />
            <Triangle w={11} h={6} color="#44577a" />
          </NotesScroll>
        </NotesRow>
      </Editor>
    </Work>
  );
}

function StatusBar() {
  const line = { fill: 'none', stroke: '#44546d' };
  return (
    <Status>
      <StatusCell $first>幻灯片 第 1 张，共 1 张</StatusCell>
      <StatusCell>“Office 主题”</StatusCell>
      <StatusCell><SpellIcon />中文(中国)</StatusCell>
      <Views>
        <ViewButton type="button" $on aria-label="普通视图">
          <svg width="14" height="12" viewBox="0 0 14 12"><path d="M.5.5h13v11H.5zM5.500.5v11M0 3.500h5M0 6.500h5M7.500 2.500h4v4h-4zM6 8.500h7" {...line} /></svg>
        </ViewButton>
        <ViewButton type="button" aria-label="幻灯片浏览">
          <svg width="14" height="12" viewBox="0 0 14 12"><path d="M.5.5h5v4h-5zM8.500.5h5v4h-5zM.5 7.500h5v4h-5zM8.500 7.500h5v4h-5z" {...line} /></svg>
        </ViewButton>
        <ViewButton type="button" aria-label="阅读视图">
          <svg width="14" height="12" viewBox="0 0 14 12"><path d="M.5 1.500L7 2.500l6.500-1v9l-6.500 1-6.500-1zM7 2v9M2 4.500h3.500M2 7.500h3.500M8.500 4.500H12M8.500 7.500H12" {...line} /></svg>
        </ViewButton>
        <ViewButton type="button" aria-label="幻灯片放映">
          <svg width="14" height="12" viewBox="0 0 14 12"><path d="M0 .5h14M2.500 1v5.500h9V1M7 7v4M4 11.500h6" {...line} /></svg>
        </ViewButton>
      </Views>
      <Percent>76%</Percent>
      <RoundButton type="button" aria-label="缩小">
        <svg width="10" height="10" viewBox="0 0 10 10"><path d="M0 5h10" stroke="#333f52" strokeWidth="2" /></svg>
      </RoundButton>
      <Zoom type="range" defaultValue="37" aria-label="显示比例" />
      <RoundButton type="button" aria-label="放大">
        <svg width="10" height="10" viewBox="0 0 10 10"><path d="M0 5h10M5 0v10" stroke="#333f52" strokeWidth="2" /></svg>
      </RoundButton>
      <FitButton type="button" aria-label="适应窗口">
        <svg width="20" height="20" viewBox="0 0 20 20">
          <rect x=".5" y=".5" width="19" height="19" rx="2" fill="#edf3fb" stroke="#53759f" />
          <path d="M3 3.500h14M3 16.500h14M3.500 3v14M16.500 3v14" {...line} strokeDasharray="2 1" />
          <path d="M8 6h4M10 4v4M8 14h4M10 12v4M4 10h4M6 8v4M12 10h4M14 8v4" {...line} />
        </svg>
      </FitButton>
    </Status>
  );
}

function WindowsTaskbar() {
  const white = { fill: 'none', stroke: '#fff' };
  return (
    <Taskbar>
      <TaskButton type="button" aria-label="开始">
        <svg width="20" height="20" viewBox="0 0 20 20"><path d="M0 2.700l8.500-1.200v8H0zM9.500 1.400L20 0v9.500H9.500zM0 10.500h8.500v8L0 17.300zM9.500 10.500H20V20L9.500 18.600z" fill="#fff" /></svg>
      </TaskButton>
      <TaskButton type="button" aria-label="Cortana">
        <svg width="20" height="20" viewBox="0 0 20 20"><circle cx="10" cy="10" r="8.500" {...white} strokeWidth="2.600" /></svg>
      </TaskButton>
      <TaskButton type="button" aria-label="任务视图">
        <svg width="22" height="20" viewBox="0 0 22 20"><path d="M1.500 0v3.500h12V0M1.500 20v-3.500h12V20M1.500 6.500h12v7h-12zM19.500 0v4M19.500 10v9" {...white} /><path d="M18 6h3v3h-3z" fill="#fff" /></svg>
      </TaskButton>
      <AppButton type="button" $on aria-label="PowerPoint"><OfficeIcon /></AppButton>
      <AppButton type="button" aria-label="Word"><OfficeIcon word /></AppButton>
      <Tray>
        <TrayButton type="button" aria-label="隐藏的图标">
          <svg width="16" height="9" viewBox="0 0 16 9"><path d="M.5 8.500L8 1l7.500 7.500" {...white} strokeWidth="1.300" /></svg>
        </TrayButton>
        <TrayButton type="button" aria-label="安全卫士">
          <svg width="20" height="20" viewBox="0 0 20 20">
            <circle cx="10" cy="10" r="10" fill="#f6c500" />
            <path d="M0 10A10 10 0 0 1 14 1Q9 8 4 18 0 15 0 10z" fill="#8fd11f" />
            <path d="M10 5v10M5 10h10" stroke="#0d6b1f" strokeWidth="3" />
          </svg>
        </TrayButton>
        <TrayButton type="button" aria-label="网络">
          <svg width="20" height="17" viewBox="0 0 20 17"><path d="M6 2.500h13.500v10h-14V7M12.500 12.500v3M8 16h9M.5.500h4v5h-4zM2.500 5.500v7H5" {...white} /></svg>
        </TrayButton>
        <TrayButton type="button" aria-label="音量">
          <svg width="21" height="16" viewBox="0 0 21 16"><path d="M.5 5.500h3L8 1.500v13l-4.500-4h-3zM11 5q2 3 0 6" {...white} /><path d="M14 3q4 5 0 10M17 1q5 7 0 14" fill="none" stroke="#8a8c90" /></svg>
        </TrayButton>
        <TrayButton type="button" aria-label="输入法">中</TrayButton>
        <ImeButton type="button" aria-label="搜狗输入法">
          <svg width="20" height="20" viewBox="0 0 20 20">
            <path d="M1 3l16-3 3 16-16 4z" fill="#f0512a" />
            <path d="M15 5Q6 3 6 7t8 4q1 5-9 3.500" fill="none" stroke="#fff" strokeWidth="2.800" />
          </svg>
        </ImeButton>
        <Clock>
          <span>10:47</span>
          <span>2020/2/3 星期一</span>
        </Clock>
        <Notice type="button" aria-label="通知">
          <svg width="32" height="32" viewBox="0 0 32 32">
            <path d="M2 1h20v16h-9l-4 4v-4H2z" fill="#fff" />
            <path d="M6 5.500h12M6 9.500h12M6 13.500h8" stroke="#04070e" />
            <circle cx="21" cy="21" r="9.500" fill="#2b2d31" stroke="#85878b" />
            <text x="21" y="26" fill="#fff" fontSize="14" fontWeight="700" textAnchor="middle">1</text>
          </svg>
        </Notice>
      </Tray>
    </Taskbar>
  );
}

function SiteMark() {
  return (
    <Watermark width="320" height="160" viewBox="0 0 320 160">
      <g fill="#ffffff" fillOpacity=".74" stroke="#a3a3a3" strokeOpacity=".6" strokeWidth="1.500" paintOrder="stroke">
        <text x="14" y="105" fontFamily="Liberation Sans, sans-serif" fontSize="68" fontWeight="700">Bai</text>
        <ellipse cx="132" cy="47" rx="11.500" ry="14.500" />
        <ellipse cx="154" cy="26" rx="11" ry="15.500" />
        <ellipse cx="180" cy="28" rx="11" ry="14" />
        <ellipse cx="197" cy="54" rx="11" ry="14" />
        <path d="M164 49c11 0 14 8 21 16 8 8 17 12 17 24 0 13-9 17-18 17-8 0-12-2-20-2s-12 2-19 2c-10 0-18-5-18-17s9-16 16-24c7-9 10-16 21-16z" />
        <text x="163" y="96" fontFamily="Open Sans, sans-serif" fontSize="38" fontWeight="600" textAnchor="middle" stroke="#8f8f8f">du</text>
        <text x="211" y="102" fontFamily="Noto Sans CJK SC, sans-serif" fontSize="51" fontWeight="900">经验</text>
      </g>
      <text x="20" y="143" fontFamily="Open Sans, sans-serif" fontSize="34" fontWeight="500" fill="#ffffff" fillOpacity=".8" stroke="#999999" strokeOpacity=".4" strokeWidth="1.500" paintOrder="stroke">jingyan.baidu.com</text>
    </Watermark>
  );
}

export default function App() {
  return (
    <>
      <GlobalStyle />
      <Desktop>
        <TopBar />
        <RibbonBar />
        <RibbonEdge />
        <WorkArea />
        <StatusBar />
        <WindowsTaskbar />
        <SpeedBall>52</SpeedBall>
        <SiteMark />
      </Desktop>
    </>
  );
}
